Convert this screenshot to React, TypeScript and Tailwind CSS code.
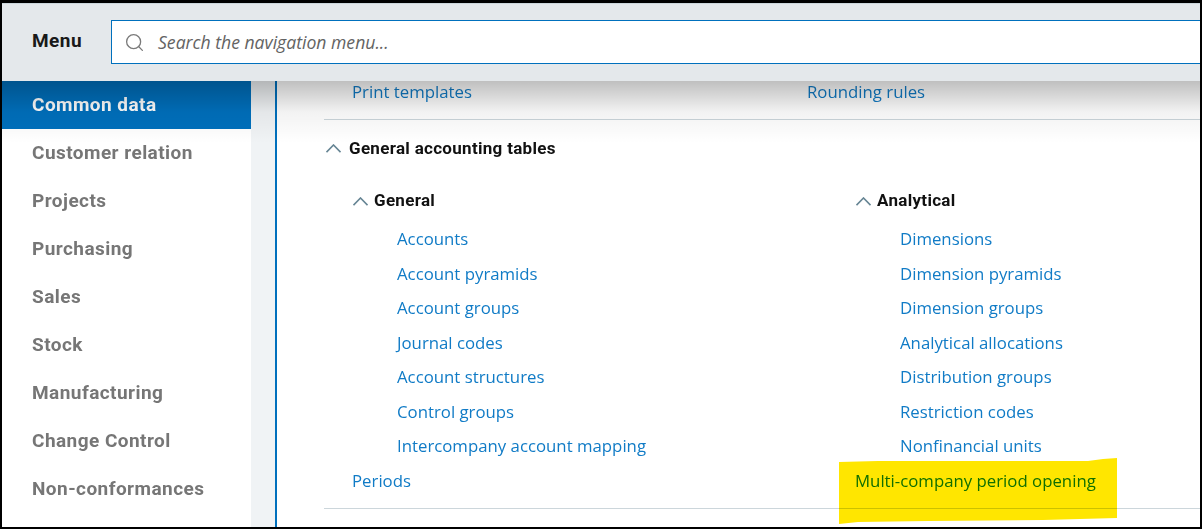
import { Search } from 'lucide-react'

const NAV = ['Customer relation', 'Projects', 'Purchasing', 'Sales', 'Stock', 'Manufacturing', 'Change Control', 'Non-conformances']
const GENERAL = ['Accounts', 'Account pyramids', 'Account groups', 'Journal codes', 'Account structures', 'Control groups', 'Intercompany account mapping']
const ANALYTICAL = ['Dimensions', 'Dimension pyramids', 'Dimension groups', 'Analytical allocations', 'Distribution groups', 'Restriction codes', 'Nonfinancial units']

const bold = "font-['Roboto',sans-serif] font-bold"
const navText = `${bold} text-[19px] tracking-[0.45px]`
const link = "font-['Open_Sans',sans-serif] text-[16.8px] text-[#107bc6] leading-[34.5px] h-[34.5px]"

function Chevron() {
  return (
    <svg width="15" height="9" viewBox="0 0 15 9" fill="none" className="shrink-0">
      <path d="M0.5 8.2 L7.5 1 L14.5 8.2" stroke="#668594" strokeWidth="1.6" />
    </svg>
  )
}

function LinkColumn({ title, items }: { title: string; items: string[] }) {
  return (
    <div>
      <div className="h-[24px] flex items-center gap-[6px] pl-[29px]">
        <Chevron />
        <span className={`${bold} text-[17px] tracking-[0.3px] text-[#111]`}>{title}</span>
      </div>
      <div className="mt-[9px] pl-[73px]">
        {items.map((item) => (
          <div key={item} className={link}>{item}</div>
        ))}
      </div>
    </div>
  )
}

export default function App() {
  return (
    <div className="relative w-[1202px] h-[529px] overflow-hidden border-t-[3px] border-x-2 border-b-2 border-black bg-white">
      <header className="h-[78px] bg-[#e4e8eb] border-t border-[#ccd6db] flex items-center pl-[30px] relative z-10">
        <span className={`${navText} text-[#191919] w-[79px] -mt-[2px]`}>Menu</span>
        <div className="flex-1 -mr-1 h-[44px] -mt-[1px] bg-white border border-[#0070bd] flex items-center pl-[12px]">
          <Search className="w-[21px] h-[21px] text-[#7a7a7a]" strokeWidth={1.5} />
          <span className="ml-[13px] font-['Open_Sans',sans-serif] italic text-[17.6px] text-[#636363]">Search the navigation menu...</span>
        </div>
      </header>

      <div className="flex h-[446px]">
        <nav className="w-[249px] bg-white">
          <div className={`h-[48px] bg-[#0070bd] flex items-center pl-[30px] ${navText} text-white`}>Common data</div>
          {NAV.map((item) => (
            <div key={item} className={`h-[48px] flex items-center pl-[30px] ${navText} text-[#767676]`}>{item}</div>
          ))}
        </nav>
        <div className="w-[24px] bg-[#f0f3f5]" />
        <main className="flex-1 border-l-2 border-[#0070bd] pl-[47px]">
          <div className="border-b border-[#ccd6db] h-[39px] pl-[28px] flex">
            <div className={`${link} w-[455px] -mt-[6px]`}>Print templates</div>
            <div className={`${link} -mt-[6px]`}>Rounding rules</div>
          </div>
          <div className="h-[62px] pt-[16px] flex items-start gap-[8px] pl-[2px]">
            <div className="h-[25px] flex items-center"><Chevron /></div>
            <span className={`${bold} text-[17px] tracking-[0.3px] text-[#111] leading-[25px]`}>General accounting tables</span>
          </div>
          <div className="grid grid-cols-[503px_1fr] pt-[7px]">
            <LinkColumn title="General" items={GENERAL} />
            <LinkColumn title="Analytical" items={ANALYTICAL} />
          </div>
          <div className="grid grid-cols-[503px_1fr] pl-[28px] border-b border-[#ccd6db] h-[45px]">
            <div className={link}>Periods</div>
            <div className={`${link} -ml-[28px] pl-[28px]`}>Multi-company period opening</div>
          </div>
        </main>
      </div>

      <div className="absolute left-0 right-0 top-[78px] h-[62px] bg-gradient-to-b from-black/25 via-black/5 to-transparent pointer-events-none" />
      <svg className="absolute left-[836px] top-[455px] mix-blend-multiply" width="282" height="70" viewBox="0 0 282 70">
        <path d="M1 4 L40 3 L250 3 L265 1 L279 0 L279 60 L205 62 L90 63 L20 64 L1 66 Z" fill="#ffe600" />
      </svg>
    </div>
  )
}
